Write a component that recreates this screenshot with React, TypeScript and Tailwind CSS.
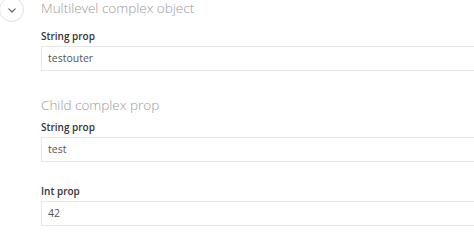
const font = { fontFamily: '"Open Sans", "Noto Sans", sans-serif' };

function Field({ label, value, className = '' }: { label: string; value: string; className?: string }) {
  return (
    <div className={className}>
      <label className="block text-[10px] font-semibold leading-[14px] text-[#333]">{label}</label>
      <div className="mt-[3px] h-[25px] border border-[#e8e8e8] bg-white pl-[6px] text-[10.5px] leading-[23px] text-[#555]">
        {value}
      </div>
    </div>
  );
}

export default function App() {
  return (
    <div className="h-[226px] w-[474px] overflow-hidden bg-white" style={font}>
      <div className="flex">
        <div className="w-[41px] shrink-0">
          <button className="-ml-[1px] -mt-[3px] flex h-[25px] w-[25px] items-center justify-center rounded-full border border-[#e0e0e0] bg-white">
            <svg width="8" height="5" viewBox="0 0 8 5" fill="none" className="mt-[2px]">
              <polyline points="0.8,0.8 4,4 7.2,0.8" stroke="#666" strokeWidth="1.2" strokeLinecap="round" strokeLinejoin="round" />
            </svg>
          </button>
        </div>
        <div className="w-[460px] shrink-0">
          <h3 className="-mt-[1px] text-[13.5px] font-light leading-[18px] text-[#999]">Multilevel complex object</h3>
          <Field label="String prop" value="testouter" className="mt-[12px]" />
          <h3 className="mt-[25px] text-[13.5px] font-light leading-[18px] text-[#999]">Child complex prop</h3>
          <Field label="String prop" value="test" className="mt-[6px]" />
          <Field label="Int prop" value="42" className="mt-[22px]" />
        </div>
      </div>
    </div>
  );
}
